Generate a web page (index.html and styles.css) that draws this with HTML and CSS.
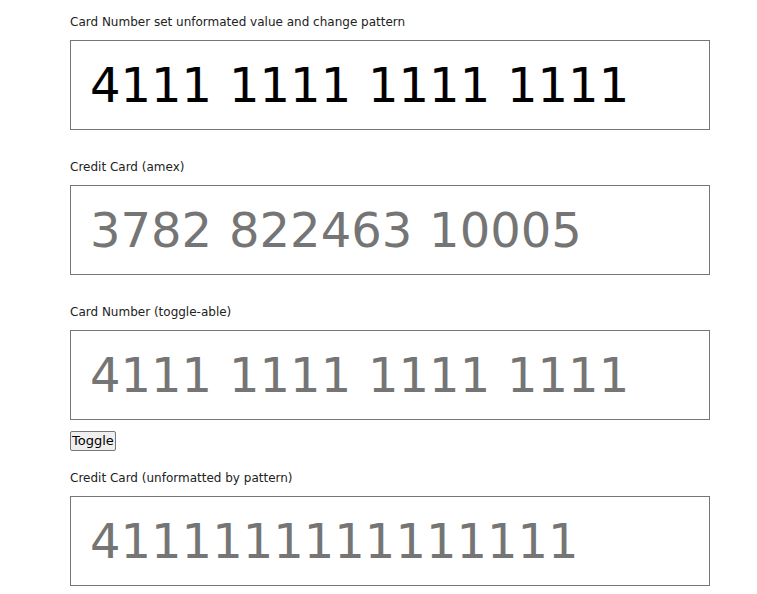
FILE: index.html
```html
<!DOCTYPE html>
<html>
<head>
<meta charset="utf-8">
<link rel="stylesheet" href="styles.css">
</head>
<body>
<div class="page">
  <div class="group">
    <label class="label">Card Number set unformated value and change pattern</label>
    <input class="field" type="text" value="4111 1111 1111 1111">
  </div>
  <div class="group">
    <label class="label">Credit Card (amex)</label>
    <input class="field" type="text" placeholder="3782 822463 10005">
  </div>
  <div class="group">
    <label class="label">Card Number (toggle-able)</label>
    <input class="field" type="text" placeholder="4111 1111 1111 1111">
    <button class="btn" type="button">Toggle</button>
  </div>
  <div class="group">
    <label class="label">Credit Card (unformatted by pattern)</label>
    <input class="field" type="text" placeholder="4111111111111111">
  </div>
</div>
</body>
</html>
```

FILE: styles.css
```css
html, body {
  margin: 0;
  padding: 0;
  background: #ffffff;
}

.page {
  padding: 15px 0 0 70px;
  font-family: "DejaVu Sans", Verdana, sans-serif;
}

.group {
  display: flex;
  flex-direction: column;
  align-items: flex-start;
  margin-bottom: 20px;
}

.label {
  display: block;
  font-size: 12px;
  line-height: 15px;
  color: #222222;
  margin-bottom: 10px;
}

.field {
  box-sizing: border-box;
  width: 640px;
  height: 90px;
  margin: 0 0 10px 0;
  padding: 0 19px;
  border: 1px solid #767676;
  border-radius: 0;
  font-family: "DejaVu Sans", Verdana, sans-serif;
  font-size: 48px;
  word-spacing: 1.6px;
  color: #000000;
  background: #ffffff;
  outline: none;
}

.field::placeholder {
  color: #757575;
  opacity: 1;
}

.btn {
  box-sizing: border-box;
  height: 20px;
  margin: 1px 0 0 0;
  padding: 0 1px;
  border: 1px solid #767676;
  border-radius: 2px;
  background: #efefef;
  font-family: "DejaVu Sans", Verdana, sans-serif;
  font-size: 13px;
  line-height: 16px;
  color: #000000;
}
```
